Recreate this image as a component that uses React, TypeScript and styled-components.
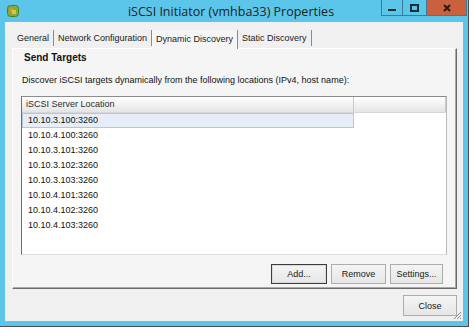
import styled, { createGlobalStyle } from "styled-components";

const GlobalStyle = createGlobalStyle`
  html, body {
    margin: 0;
    padding: 0;
    background: #ffffff;
  }
  body {
    font-family: "Liberation Sans", Arial, sans-serif;
    color: #111111;
  }
`;

const Window = styled.div`
  box-sizing: border-box;
  width: 469px;
  height: 327px;
  display: flex;
  flex-direction: column;
  padding: 0 5px 5px 5px;
  background: #5cc6ea;
  border-right: 1px solid #4d4d4d;
  border-bottom: 1px solid #4d4d4d;
`;

const TitleBar = styled.div`
  height: 22px;
  margin: 0 -5px;
  display: grid;
  grid-template-columns: 1fr auto 1fr;
  align-items: start;
`;

const AppIcon = styled.div`
  padding: 5px 0 0 7px;
  line-height: 0;
`;

const TitleText = styled.div`
  font-family: "Open Sans", "Noto Sans", sans-serif;
  font-size: 12.5px;
  line-height: 23px;
  color: #1d1d1d;
  margin-right: 6px;
`;

const Controls = styled.div`
  justify-self: end;
  display: flex;
  margin-right: 1px;
`;

const CtrlButton = styled.div<{ $w: number; $close?: boolean }>`
  box-sizing: border-box;
  width: ${(p) => p.$w}px;
  height: 16px;
  display: flex;
  align-items: center;
  justify-content: center;
  background: ${(p) => (p.$close ? "#c9613f" : "#5cc6ea")};
  border: 1px solid #3d7c99;
  border-top: none;
  & + & {
    border-left: none;
  }
`;

const Client = styled.div`
  position: relative;
  flex: 1;
  display: flex;
  flex-direction: column;
  background: #f0f0f0;
  padding: 7px 6px 5px 7px;
`;

const TabStrip = styled.div`
  height: 19px;
  display: flex;
  align-items: flex-end;
  padding-left: 1px;
  font-size: 9px;
`;

const Tab = styled.div<{ $active?: boolean }>`
  box-sizing: border-box;
  height: ${(p) => (p.$active ? 19 : 16)}px;
  padding: 0 4px;
  display: flex;
  align-items: ${(p) => (p.$active ? "flex-start" : "center")};
  padding-top: ${(p) => (p.$active ? 4 : 0)}px;
  border-right: 1px solid #8a8a8a;
  margin-bottom: ${(p) => (p.$active ? -1 : 2)}px;
  background: ${(p) => (p.$active ? "#f5f5f5" : "transparent")};
  color: #1a1a1a;
  position: relative;
  z-index: ${(p) => (p.$active ? 1 : 0)};
`;

const Panel = styled.div`
  box-sizing: border-box;
  height: 241px;
  display: flex;
  flex-direction: column;
  background: #f5f5f5;
  border-left: 1px solid #ffffff;
  border-top: 1px solid #ffffff;
  border-right: 1px solid #6b6b6b;
  border-bottom: 1px solid #6b6b6b;
  box-shadow: inset -1px -1px 0 #a9a9a9;
  padding: 3px 9px 4px 8px;
  font-size: 9px;
`;

const Heading = styled.div`
  font-weight: bold;
  font-size: 10px;
  line-height: 12px;
  margin-left: 3px;
`;

const Description = styled.div`
  line-height: 12px;
  margin: 10px 0 0 1px;
`;

const ListBox = styled.div`
  box-sizing: border-box;
  height: 159px;
  margin-top: 10px;
  background: #ffffff;
  border-top: 1px solid #8c8c8c;
  border-left: 1px solid #6f6f6f;
  border-right: 1px solid #b9b9b9;
  border-bottom: 1px solid #dcdcdc;
  display: flex;
  flex-direction: column;
`;

const HeaderRow = styled.div`
  height: 15px;
  display: flex;
  background: linear-gradient(#ffffff, #f2f2f2 50%, #e4e4e4);
  border-bottom: 1px solid #d6d6d6;
`;

const HeaderCell = styled.div<{ $w?: number }>`
  box-sizing: border-box;
  ${(p) => (p.$w ? `width: ${p.$w}px;` : "flex: 1;")}
  padding-left: 4px;
  line-height: 14px;
  border-right: 1px solid #c9c9c9;
  color: #2b2b2b;
`;

const Row = styled.div<{ $focus?: boolean }>`
  box-sizing: border-box;
  width: 332px;
  height: 15px;
  line-height: 13px;
  padding-left: 5px;
  border: 1px solid ${(p) => (p.$focus ? "#b8c6d8" : "transparent")};
  background: ${(p) => (p.$focus ? "#e6edf6" : "transparent")};
`;

const ButtonRow = styled.div<{ $right: number; $top: number }>`
  display: flex;
  justify-content: flex-end;
  gap: 4px;
  margin-top: ${(p) => p.$top}px;
  margin-right: ${(p) => p.$right}px;
`;

const Button = styled.div<{ $w: number; $h?: number; $default?: boolean }>`
  box-sizing: border-box;
  width: ${(p) => p.$w}px;
  height: ${(p) => p.$h ?? 20}px;
  display: flex;
  align-items: center;
  justify-content: center;
  background: linear-gradient(#f4f4f4, #e6e6e6);
  border: 1px solid ${(p) => (p.$default ? "#3c3c3c" : "#adadad")};
  box-shadow: ${(p) => (p.$default ? "inset 0 0 0 1px #dadada" : "none")};
  color: #1a1a1a;
  font-size: 9px;
`;

const Grip = styled.svg`
  position: absolute;
  right: 1px;
  bottom: 1px;
`;

const targets = [
  "10.10.3.100:3260",
  "10.10.4.100:3260",
  "10.10.3.101:3260",
  "10.10.3.102:3260",
  "10.10.3.103:3260",
  "10.10.4.101:3260",
  "10.10.4.102:3260",
  "10.10.4.103:3260",
];

const tabs = ["General", "Network Configuration", "Dynamic Discovery", "Static Discovery"];

export default function App() {
  return (
    <>
      <GlobalStyle />
      <Window>
        <TitleBar>
          <AppIcon>
            <svg width="12" height="12" viewBox="0 0 12 12">
              <rect x="0.5" y="0.5" width="11" height="11" rx="3" fill="#7cae3c" stroke="#4f7d22" />
              <rect x="3" y="3.5" width="4" height="4" fill="#e8923a" />
              <rect x="5" y="5" width="4" height="4" fill="#f0c24a" opacity="0.9" />
            </svg>
          </AppIcon>
          <TitleText>iSCSI Initiator (vmhba33) Properties</TitleText>
          <Controls>
            <CtrlButton $w={22}>
              <svg width="8" height="8" viewBox="0 0 8 8">
                <rect x="0" y="5" width="8" height="2" fill="#1f2d36" />
              </svg>
            </CtrlButton>
            <CtrlButton $w={24}>
              <svg width="9" height="8" viewBox="0 0 9 8">
                <rect x="1" y="1" width="7" height="6" fill="none" stroke="#1f2d36" strokeWidth="2" />
              </svg>
            </CtrlButton>
            <CtrlButton $w={40} $close>
              <svg width="8" height="8" viewBox="0 0 8 8">
                <path d="M1 1L7 7M7 1L1 7" stroke="#2a1a14" strokeWidth="2" />
              </svg>
            </CtrlButton>
          </Controls>
        </TitleBar>
        <Client>
          <TabStrip>
            {tabs.map((t) => (
              <Tab key={t} $active={t === "Dynamic Discovery"}>
                {t}
              </Tab>
            ))}
          </TabStrip>
          <Panel>
            <Heading>Send Targets</Heading>
            <Description>
              Discover iSCSI targets dynamically from the following locations (IPv4, host name):
            </Description>
            <ListBox>
              <HeaderRow>
                <HeaderCell $w={332}>iSCSI Server Location</HeaderCell>
                <HeaderCell />
              </HeaderRow>
              {targets.map((t, i) => (
                <Row key={t} $focus={i === 0}>
                  {t}
                </Row>
              ))}
            </ListBox>
            <ButtonRow $right={4} $top={9}>
              <Button $w={56} $default>
                Add...
              </Button>
              <Button $w={55}>Remove</Button>
              <Button $w={53}>Settings...</Button>
            </ButtonRow>
          </Panel>
          <ButtonRow $right={0} $top={6}>
            <Button $w={54} $h={21}>
              Close
            </Button>
          </ButtonRow>
          <Grip width="10" height="10" viewBox="0 0 10 10">
            <path d="M9 2L2 9M9 5L5 9M9 8L8 9" stroke="#8a8a8a" strokeWidth="1" />
          </Grip>
        </Client>
      </Window>
    </>
  );
}
